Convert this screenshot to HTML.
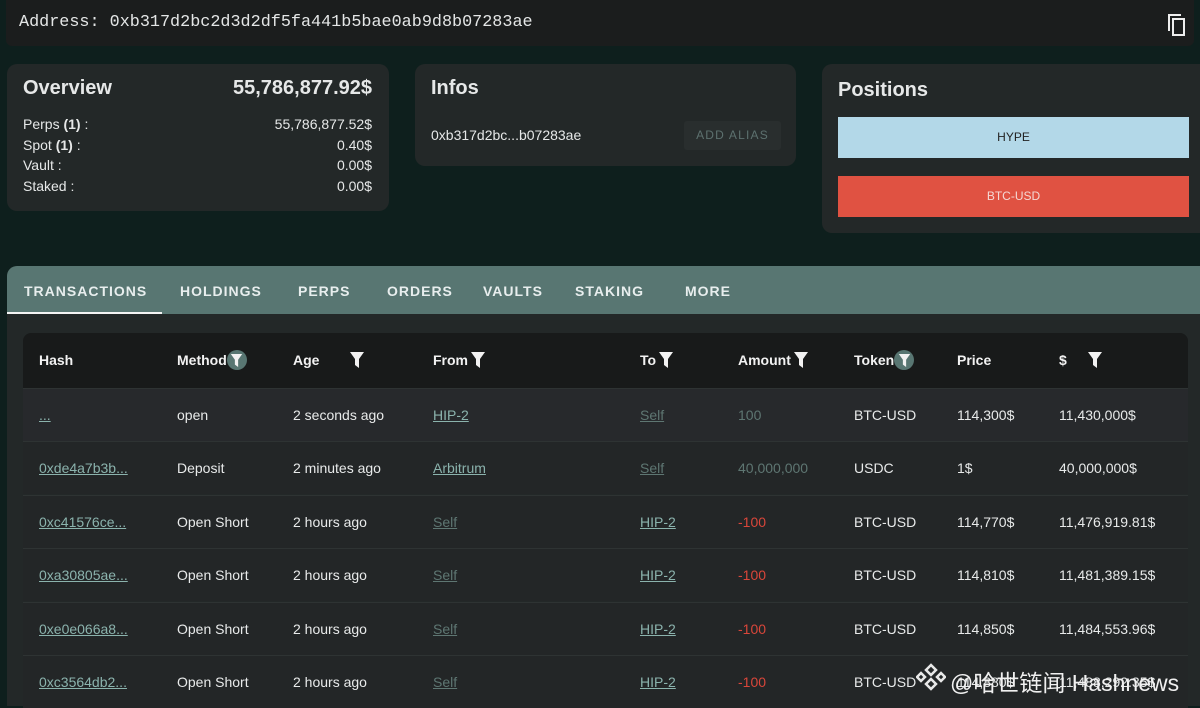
<!DOCTYPE html>
<html><head><meta charset="utf-8"><style>
*{margin:0;padding:0;box-sizing:border-box}
body{width:1200px;height:701px;overflow:hidden;background:#0e1f1d;font-family:"Liberation Sans",sans-serif;color:#e6e8e8;position:relative}
.a{position:absolute}
.card{position:absolute;background:#232828;border-radius:10px}
.mono{font-family:"Liberation Mono",monospace}
.tab{position:absolute;top:283px;font-size:14px;letter-spacing:1px;font-weight:bold;color:#e8eeee}
.th{position:absolute;top:350px;height:20px;font-size:14px;font-weight:bold;color:#f2f2f2;display:flex;align-items:center}
.row{position:absolute;left:23px;width:1165px;height:53px;background:#232627;border-top:1px solid #2e3333}
.c{position:absolute;top:18px;font-size:14px;color:#e8eaea}
.lk{text-decoration:underline;color:#8bb3ad}
.dim{color:#5e7672}
.red{color:#d9463a}
.fc{display:flex;width:20px;height:20px;border-radius:10px;background:#587672;align-items:center;justify-content:center}
</style></head><body>
<div class="a" style="left:6px;top:0;width:1188px;height:46px;background:#1b1d1d;border-radius:0 0 6px 6px"></div>
<div class="a mono" style="left:19px;top:13px;font-size:16.8px;color:#e4e6e6">Address: 0xb317d2bc2d3d2df5fa441b5bae0ab9d8b07283ae</div>
<svg class="a" style="left:1166px;top:12px" width="24" height="26" viewBox="0 0 24 26"><path d="M3 19V3h12" fill="none" stroke="#eee" stroke-width="2"/><rect x="7" y="7" width="11" height="16" fill="none" stroke="#eee" stroke-width="2"/></svg>

<div class="card" style="left:7px;top:64px;width:382px;height:147px"></div>
<div class="a" style="left:23px;top:77px;font-size:20px;font-weight:bold">Overview</div>
<div class="a" style="right:828px;top:77px;font-size:20px;font-weight:bold">55,786,877.92$</div>
<div class="a" style="left:23px;top:114px;font-size:14px;line-height:20.5px">Perps <b>(1)</b> :<br>Spot <b>(1)</b> :<br>Vault :<br>Staked :</div>
<div class="a" style="right:828px;top:114px;font-size:14px;line-height:20.5px;text-align:right">55,786,877.52$<br>0.40$<br>0.00$<br>0.00$</div>

<div class="card" style="left:415px;top:64px;width:381px;height:102px"></div>
<div class="a" style="left:431px;top:77px;font-size:20px;font-weight:bold">Infos</div>
<div class="a" style="left:431px;top:127px;font-size:14px">0xb317d2bc...b07283ae</div>
<div class="a" style="left:684px;top:121px;width:97px;height:29px;background:#292e2e;border-radius:3px;color:#5d716f;font-size:12px;letter-spacing:1.2px;text-align:center;line-height:29px">ADD ALIAS</div>

<div class="card" style="left:822px;top:64px;width:390px;height:169px"></div>
<div class="a" style="left:838px;top:79px;font-size:20px;font-weight:bold">Positions</div>
<div class="a" style="left:838px;top:117px;width:351px;height:41px;background:#b3d8e8;color:#222;font-size:12px;text-align:center;line-height:41px">HYPE</div>
<div class="a" style="left:838px;top:176px;width:351px;height:41px;background:#e05242;color:#f4d8d4;font-size:12px;text-align:center;line-height:41px">BTC-USD</div>

<div class="a" style="left:7px;top:266px;width:1200px;height:440px;background:#232828;border-radius:10px 0 0 0"></div>
<div class="a" style="left:7px;top:266px;width:1200px;height:48px;background:#587672;border-radius:10px 0 0 0"></div>
<div class="a" style="left:7px;top:312px;width:155px;height:2px;background:#f4f4f4"></div>
<div class="tab" style="left:24px">TRANSACTIONS</div>
<div class="tab" style="left:180px">HOLDINGS</div>
<div class="tab" style="left:298px">PERPS</div>
<div class="tab" style="left:387px">ORDERS</div>
<div class="tab" style="left:483px">VAULTS</div>
<div class="tab" style="left:575px">STAKING</div>
<div class="tab" style="left:685px">MORE</div>

<div class="a" style="left:23px;top:333px;width:1165px;height:56px;background:#181a1a;border-radius:8px 8px 0 0"></div>
<svg width="0" height="0" style="position:absolute"><defs><symbol id="fl" viewBox="0 0 16 18"><path d="M1 1h14l-5 7v9l-4-3V8z" fill="#f2f2f2"/></symbol></defs></svg>
<div class="th" style="left:39px">Hash</div>
<div class="th" style="left:177px">Method<span class="fc"><svg width="13" height="15"><use href="#fl"/></svg></span></div>
<div class="th" style="left:293px">Age<svg width="16" height="18" style="margin-left:30px"><use href="#fl"/></svg></div>
<div class="th" style="left:433px">From<svg width="16" height="18" style="margin-left:2px"><use href="#fl"/></svg></div>
<div class="th" style="left:640px">To<svg width="16" height="18" style="margin-left:2px"><use href="#fl"/></svg></div>
<div class="th" style="left:738px">Amount<svg width="16" height="18" style="margin-left:2px"><use href="#fl"/></svg></div>
<div class="th" style="left:854px">Token<span class="fc"><svg width="13" height="15"><use href="#fl"/></svg></span></div>
<div class="th" style="left:957px">Price</div>
<div class="th" style="left:1059px">$<svg width="16" height="18" style="margin-left:20px"><use href="#fl"/></svg></div>

<div class="row" style="top:388px;background:#27292c"><span class="c lk" style="left:16px">...</span><span class="c" style="left:154px">open</span><span class="c" style="left:270px">2 seconds ago</span><span class="c lk" style="left:410px">HIP-2</span><span class="c lk dim" style="left:617px">Self</span><span class="c dim" style="left:715px">100</span><span class="c" style="left:831px">BTC-USD</span><span class="c" style="left:934px">114,300$</span><span class="c" style="left:1036px">11,430,000$</span></div>
<div class="row" style="top:441px"><span class="c lk" style="left:16px">0xde4a7b3b...</span><span class="c" style="left:154px">Deposit</span><span class="c" style="left:270px">2 minutes ago</span><span class="c lk" style="left:410px">Arbitrum</span><span class="c lk dim" style="left:617px">Self</span><span class="c dim" style="left:715px">40,000,000</span><span class="c" style="left:831px">USDC</span><span class="c" style="left:934px">1$</span><span class="c" style="left:1036px">40,000,000$</span></div>
<div class="row" style="top:495px"><span class="c lk" style="left:16px">0xc41576ce...</span><span class="c" style="left:154px">Open Short</span><span class="c" style="left:270px">2 hours ago</span><span class="c lk dim" style="left:410px">Self</span><span class="c lk" style="left:617px">HIP-2</span><span class="c red" style="left:715px">-100</span><span class="c" style="left:831px">BTC-USD</span><span class="c" style="left:934px">114,770$</span><span class="c" style="left:1036px">11,476,919.81$</span></div>
<div class="row" style="top:548px"><span class="c lk" style="left:16px">0xa30805ae...</span><span class="c" style="left:154px">Open Short</span><span class="c" style="left:270px">2 hours ago</span><span class="c lk dim" style="left:410px">Self</span><span class="c lk" style="left:617px">HIP-2</span><span class="c red" style="left:715px">-100</span><span class="c" style="left:831px">BTC-USD</span><span class="c" style="left:934px">114,810$</span><span class="c" style="left:1036px">11,481,389.15$</span></div>
<div class="row" style="top:602px"><span class="c lk" style="left:16px">0xe0e066a8...</span><span class="c" style="left:154px">Open Short</span><span class="c" style="left:270px">2 hours ago</span><span class="c lk dim" style="left:410px">Self</span><span class="c lk" style="left:617px">HIP-2</span><span class="c red" style="left:715px">-100</span><span class="c" style="left:831px">BTC-USD</span><span class="c" style="left:934px">114,850$</span><span class="c" style="left:1036px">11,484,553.96$</span></div>
<div class="row" style="top:655px"><span class="c lk" style="left:16px">0xc3564db2...</span><span class="c" style="left:154px">Open Short</span><span class="c" style="left:270px">2 hours ago</span><span class="c lk dim" style="left:410px">Self</span><span class="c lk" style="left:617px">HIP-2</span><span class="c red" style="left:715px">-100</span><span class="c" style="left:831px">BTC-USD</span><span class="c" style="left:934px">114,880$</span><span class="c" style="left:1036px">11,488,292.35$</span></div>

<svg class="a" style="left:916px;top:662px" width="30" height="30" viewBox="0 0 30 30"><g fill="none" stroke="#e8e8e8" stroke-width="2.5"><path d="M15 3l5 5-5 5-5-5z"/><path d="M15 17l5 5-5 5-5-5z"/><path d="M5 11l4 4-4 4-4-4z"/><path d="M25 11l4 4-4 4-4-4z"/></g></svg>
<div class="a" style="left:950px;top:664px;font-size:23px;color:#f0f0f0;font-family:'Liberation Sans','Noto Sans CJK SC',sans-serif">@哈世链闻 Hashnews</div>
</body></html>
